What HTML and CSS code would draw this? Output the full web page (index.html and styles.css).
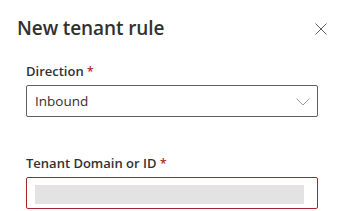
FILE: index.html
```html
<!DOCTYPE html>
<html lang="en">
<head>
    <meta charset="UTF-8">
    <title>New tenant rule</title>
    <link rel="stylesheet" href="styles.css">
</head>
<body>
    <div class="panel">
        <div class="header">
            <h1 class="title">New tenant rule</h1>
            <button class="close" aria-label="Close">
                <svg width="12" height="12" viewBox="0 0 12 12">
                    <path d="M0.5 0.5 L11.5 11.5 M11.5 0.5 L0.5 11.5" stroke="#605e5c" stroke-width="1" fill="none"/>
                </svg>
            </button>
        </div>

        <div class="field">
            <label class="label">Direction <span class="req">*</span></label>
            <div class="dropdown">
                <span>Inbound</span>
                <svg class="chevron" width="14" height="8" viewBox="0 0 14 8">
                    <path d="M0.5 0.5 L7 7 L13.5 0.5" stroke="#a19f9d" stroke-width="1" fill="none"/>
                </svg>
            </div>
        </div>

        <div class="field second">
            <label class="label">Tenant Domain or ID <span class="req">*</span></label>
            <div class="textfield error">
                <div class="redacted"></div>
            </div>
        </div>
    </div>
</body>
</html>
```

FILE: styles.css
```css
html, body {
    margin: 0;
    background: #fff;
}
.panel {
    font-family: "Open Sans", "Noto Sans", sans-serif;
    color: #323130;
    padding-top: 14px;
}
.header {
    display: flex;
    align-items: center;
    justify-content: space-between;
    padding: 0 15px 0 17px;
    height: 28px;
}
.title {
    margin: 0;
    font-size: 19px;
    font-weight: 600;
    line-height: 28px;
    letter-spacing: -0.1px;
}
.close {
    border: none;
    background: none;
    padding: 0;
    width: 14px;
    height: 14px;
    display: flex;
    align-items: center;
    justify-content: center;
    margin-top: 2px;
}
.field {
    margin: 19px 25px 0 26px;
}
.field.second {
    margin-top: 36px;
}
.label {
    display: block;
    font-size: 13px;
    font-weight: 600;
    line-height: 20px;
    margin-bottom: 3px;
}
.req {
    color: #a4262c;
    font-size: 12px;
}
.dropdown {
    height: 32px;
    box-sizing: border-box;
    border: 1px solid #605e5c;
    border-radius: 2px;
    display: flex;
    align-items: center;
    justify-content: space-between;
    padding: 0 7px 0 8px;
    font-size: 13.5px;
}
.chevron {
    margin-top: 1px;
}
.textfield {
    height: 32px;
    box-sizing: border-box;
    border: 1px solid #a4262c;
    border-radius: 2px;
    padding: 7px 0 0 8px;
}
.redacted {
    width: 269px;
    height: 19px;
    background: #e3e3e3;
}
```
